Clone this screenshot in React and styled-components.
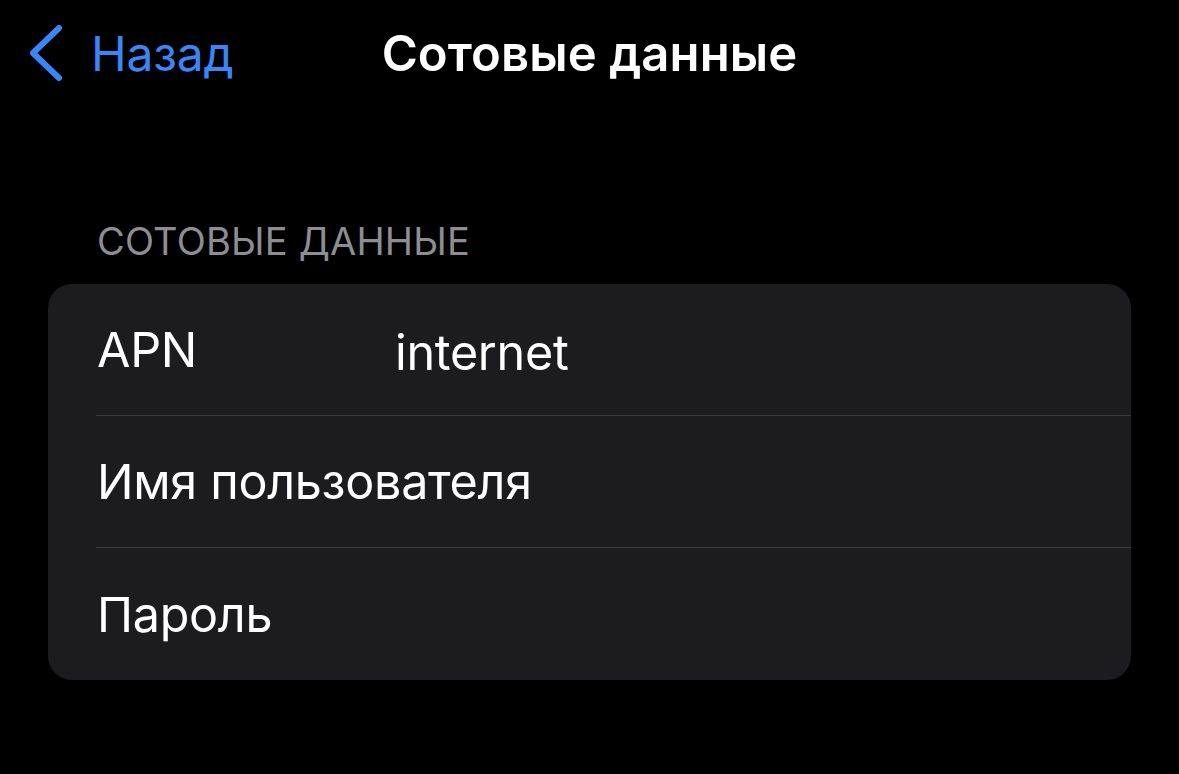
import styled, { createGlobalStyle } from "styled-components";

const GlobalStyle = createGlobalStyle`
  html, body {
    margin: 0;
    padding: 0;
    background: #000;
  }
  body {
    font-family: Inter, "Noto Sans", "Liberation Sans", sans-serif;
    color: #fff;
    -webkit-font-smoothing: antialiased;
  }
`;

const Screen = styled.div`
  width: 1179px;
  height: 774px;
  background: #000;
  overflow: hidden;
`;

const NavBar = styled.header`
  height: 106px;
  display: grid;
  grid-template-columns: 1fr auto 1fr;
  align-items: center;
`;

const BackButton = styled.button`
  display: flex;
  align-items: center;
  gap: 27px;
  padding: 0 0 0 28px;
  background: none;
  border: none;
  color: #3a86f7;
  font-family: inherit;
  font-size: 48px;
  letter-spacing: -0.2px;
  cursor: pointer;
  justify-self: start;
`;

const Title = styled.h1`
  margin: 0;
  font-size: 49px;
  font-weight: 600;
  letter-spacing: 0.1px;
  color: #fff;
`;

const Section = styled.section`
  padding: 112px 48px 0;
`;

const SectionHeader = styled.div`
  padding: 0 0 20px 49px;
  font-size: 38px;
  color: #8d8d93;
  letter-spacing: 0.2px;
  line-height: 46px;
`;

const Card = styled.div`
  background: #1c1c1e;
  border-radius: 24px;
  overflow: hidden;
`;

const Row = styled.div`
  margin-left: 48px;
  height: ${(p) => (p.$last ? "132px" : "131px")};
  display: grid;
  grid-template-columns: 298px 1fr;
  align-items: center;
  padding-left: 1px;
  border-bottom: ${(p) => (p.$last ? "none" : "1px solid #3a3a3c")};
  font-size: 48.5px;
  letter-spacing: -0.3px;
`;

const Label = styled.span`
  color: #fff;
  white-space: nowrap;
`;

const Value = styled.span`
  color: #fff;
  padding-top: 6px;
`;

const Chevron = () => (
  <svg width="36" height="58" viewBox="0 0 36 58" fill="none">
    <path
      d="M31 4 L5 29 L31 54"
      stroke="#3a86f7"
      strokeWidth="6"
      strokeLinecap="round"
      strokeLinejoin="round"
    />
  </svg>
);

const rows = [
  { label: "APN", value: "internet" },
  { label: "Имя пользователя", value: "" },
  { label: "Пароль", value: "" },
];

export default function App() {
  return (
    <>
      <GlobalStyle />
      <Screen>
        <NavBar>
          <BackButton>
            <Chevron />
            Назад
          </BackButton>
          <Title>Сотовые данные</Title>
          <div />
        </NavBar>
        <Section>
          <SectionHeader>СОТОВЫЕ ДАННЫЕ</SectionHeader>
          <Card>
            {rows.map((r, i) => (
              <Row key={r.label} $last={i === rows.length - 1}>
                <Label>{r.label}</Label>
                <Value>{r.value}</Value>
              </Row>
            ))}
          </Card>
        </Section>
      </Screen>
    </>
  );
}
